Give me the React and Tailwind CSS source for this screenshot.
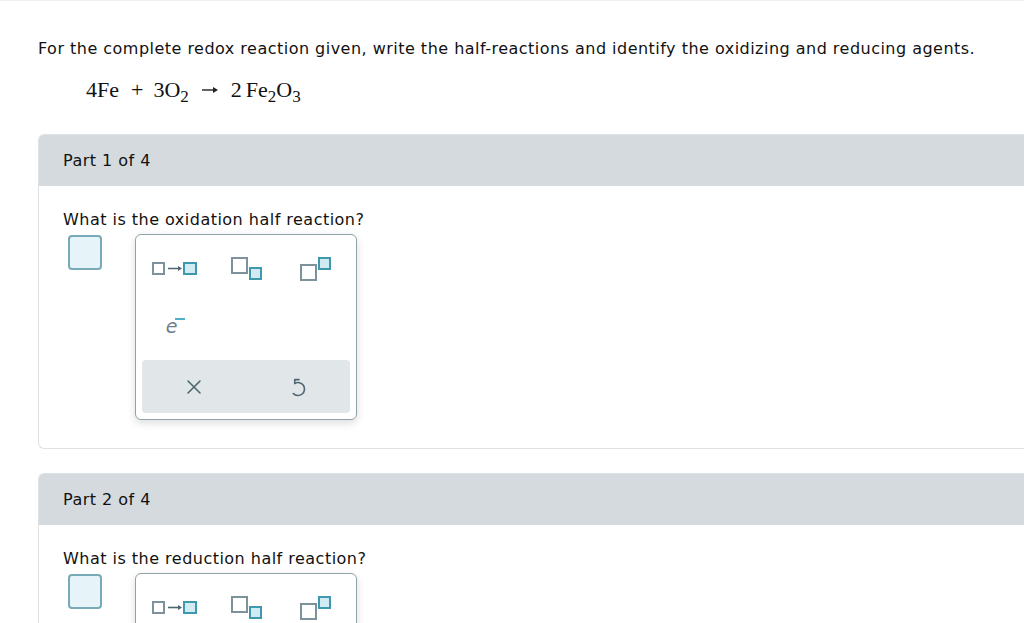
import React from "react";

const sans = { fontFamily: '"DejaVu Sans", Verdana, sans-serif', letterSpacing: "0.48px" };

function IconArrow() {
  return (
    <svg width="46" height="16" viewBox="0 0 46 16">
      <rect x="1" y="2" width="11" height="11" fill="#fff" stroke="#7d939c" strokeWidth="2" />
      <line x1="16" y1="7.5" x2="27" y2="7.5" stroke="#4f646d" strokeWidth="1.6" />
      <path d="M26 5 L30 7.5 L26 10 Z" fill="#4f646d" />
      <rect x="32" y="2" width="12" height="11" fill="#d1ebf2" stroke="#3e98ae" strokeWidth="2" />
    </svg>
  );
}

function IconSub() {
  return (
    <svg width="32" height="24" viewBox="0 0 32 24">
      <rect x="1" y="1" width="15" height="15" fill="#fff" stroke="#7d939c" strokeWidth="2" />
      <rect x="19" y="11" width="11" height="11" fill="#d1ebf2" stroke="#3e98ae" strokeWidth="2" />
    </svg>
  );
}

function IconSup() {
  return (
    <svg width="32" height="24" viewBox="0 0 32 24">
      <rect x="1" y="8" width="15" height="15" fill="#fff" stroke="#7d939c" strokeWidth="2" />
      <rect x="19" y="1" width="11" height="11" fill="#d1ebf2" stroke="#3e98ae" strokeWidth="2" />
    </svg>
  );
}

function IconX() {
  return (
    <svg width="16" height="16" viewBox="0 0 16 16">
      <path d="M2 2 L14 14 M14 2 L2 14" stroke="#4e6670" strokeWidth="1.6" strokeLinecap="round" />
    </svg>
  );
}

function IconUndo() {
  return (
    <svg width="18" height="20" viewBox="0 0 18 20">
      <path
        d="M5.75 5.4 A6.5 6.5 0 1 1 4.4 15.6"
        fill="none"
        stroke="#4e6670"
        strokeWidth="1.6"
        strokeLinecap="round"
      />
      <path
        d="M5.75 5.6 L5.75 1.6 L10 1.6"
        fill="none"
        stroke="#4e6670"
        strokeWidth="1.6"
        strokeLinecap="round"
        strokeLinejoin="round"
      />
    </svg>
  );
}

function Palette() {
  return (
    <div className="w-[222px] h-[186px] border border-[#8fa2aa] rounded-[6px] bg-white shadow-[0_3px_8px_rgba(0,0,0,0.14)] p-[6px] flex flex-col">
      <div className="grid grid-cols-3 h-[56px] items-center">
        <div className="flex justify-center pr-[4px]"><IconArrow /></div>
        <div className="flex justify-center pl-[2px]"><IconSub /></div>
        <div className="flex justify-center pl-[2px]"><IconSup /></div>
      </div>
      <div className="grid grid-cols-3 h-[58px] items-center">
        <div className="flex justify-center pr-[10px]">
          <span
            className="relative text-[19px] italic text-[#6b808a] leading-none"
            style={{ fontFamily: '"DejaVu Sans", Verdana, sans-serif' }}
          >
            e
            <span className="absolute left-[9px] top-[1px] w-[10px] h-[2px] bg-[#4fb0c6]" />
          </span>
        </div>
      </div>
      <div className="mt-auto h-[53px] bg-[#e1e6e8] rounded-[4px] grid grid-cols-2 items-center">
        <div className="flex justify-center"><IconX /></div>
        <div className="flex justify-center pt-[2px]"><IconUndo /></div>
      </div>
    </div>
  );
}

function Part({ n, question }) {
  return (
    <div className="w-[1000px] border border-[#dde2e5] border-r-0 rounded-l-[6px] overflow-hidden">
      <div className="h-[51px] bg-[#d4dadd] flex items-center pl-[24px] text-[16px] text-[#111]" style={sans}>
        Part {n} of 4
      </div>
      <div className="pl-[24px] pt-[22px] pb-[28px]">
        <div className="text-[16px] leading-[24px] text-[#111]" style={sans}>{question}</div>
        <div className="flex items-start mt-[2px]">
          <div className="ml-[5px] mt-[1px] w-[34px] h-[35px] bg-[#e6f3f8] border-2 border-[#78a9b6] rounded-[4px]" />
          <div className="ml-[33px]"><Palette /></div>
        </div>
      </div>
    </div>
  );
}

export default function App() {
  return (
    <div className="w-[1024px] h-[623px] overflow-hidden bg-white border-t border-[#eef1f2]">
      <div className="pl-[38px] pt-[36px]">
        <div className="text-[16px] leading-[24px] text-[#111] whitespace-nowrap" style={sans}>
          For the complete redox reaction given, write the half-reactions and identify the oxidizing and reducing agents.
        </div>
        <div
          className="flex items-baseline ml-[48px] mt-[12px] h-[30px] text-[22px] text-[#111]"
          style={{ fontFamily: '"Liberation Serif", "Times New Roman", serif' }}
        >
          <span>4Fe</span>
          <span className="ml-[12px]">+</span>
          <span className="ml-[10px]">3O</span>
          <span className="text-[17px] relative top-[5px]">2</span>
          <span className="ml-[12px] self-center relative top-[2px]">
            <svg width="18" height="8" viewBox="0 0 18 8">
              <line x1="1" y1="4" x2="13" y2="4" stroke="#222" strokeWidth="1.4" />
              <path d="M12 1 L17 4 L12 7 Z" fill="#222" />
            </svg>
          </span>
          <span className="ml-[12px]">2</span>
          <span className="ml-[4px]">Fe</span>
          <span className="text-[17px] relative top-[5px]">2</span>
          <span>O</span>
          <span className="text-[17px] relative top-[5px]">3</span>
        </div>
        <div className="mt-[31px]">
          <Part n={1} question="What is the oxidation half reaction?" />
        </div>
        <div className="mt-[24px]">
          <Part n={2} question="What is the reduction half reaction?" />
        </div>
      </div>
    </div>
  );
}
